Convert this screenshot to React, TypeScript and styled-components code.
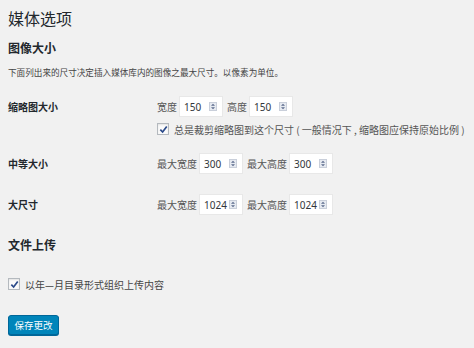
import { Fragment } from 'react';
import styled, { createGlobalStyle } from 'styled-components';

const GlobalStyle = createGlobalStyle`
  html, body {
    margin: 0;
    padding: 0;
    background: #f1f1f1;
  }
  body {
    font-family: "Noto Sans CJK SC", "Noto Sans", sans-serif;
    color: #444;
  }
`;

const Page = styled.div`
  width: 474px;
  height: 348px;
  padding: 6px 8px 0;
  box-sizing: border-box;
  overflow: hidden;
`;

const Title = styled.h1`
  margin: 0;
  font-size: 16px;
  font-weight: 400;
  line-height: 24px;
  color: #23282d;
`;

const SectionTitle = styled.h2<{ $top: number }>`
  margin: ${({ $top }) => $top}px 0 0;
  font-size: 12px;
  font-weight: 700;
  line-height: 16px;
  color: #23282d;
`;

const Description = styled.p`
  margin: 9px 0 0;
  font-size: 8.6px;
  line-height: 14px;
  color: #444;
`;

const Row = styled.div<{ $top: number }>`
  display: grid;
  grid-template-columns: 149px 1fr;
  margin-top: ${({ $top }) => $top}px;
`;

const RowLabel = styled.div`
  font-size: 10px;
  font-weight: 700;
  color: #23282d;
  line-height: 19px;
`;

const Field = styled.div`
  display: flex;
  flex-direction: column;
  gap: 6px;
`;

const InputRow = styled.div`
  display: flex;
  align-items: center;
  height: 19px;
  font-size: 10px;
  color: #555;
`;

const FieldLabel = styled.span`
  margin-right: 3px;
`;

const NumberBox = styled.div`
  display: flex;
  align-items: center;
  justify-content: space-between;
  width: 42px;
  height: 19px;
  box-sizing: border-box;
  padding: 0 5px 0 4px;
  margin-right: 5px;
  background: #fff;
  box-shadow: 0 0 0 1px #e8e8e8;
  font-size: 10px;
  color: #32373c;
  font-family: "Noto Sans", "Noto Sans CJK SC", sans-serif;
`;

const CheckRow = styled.label`
  display: flex;
  align-items: center;
  gap: 5px;
  height: 14px;
  font-size: 10px;
  color: #555;
  white-space: nowrap;
`;

const Box = styled.span`
  display: flex;
  align-items: center;
  justify-content: center;
  width: 10px;
  height: 10px;
  background: #fbfbfb;
  border: 1px solid #b4b9be;
  box-shadow: inset 0 1px 2px rgba(0, 0, 0, 0.1);
  flex-shrink: 0;
`;

const UploadCheck = styled(CheckRow)`
  margin-top: 24px;
  color: #444;
`;

const SaveButton = styled.button`
  display: block;
  margin-top: 24px;
  height: 20px;
  width: 51px;
  padding: 0;
  border: 1px solid #006799;
  border-radius: 3px;
  background: #0085ba;
  color: #fff;
  font-family: "Noto Sans CJK SC", sans-serif;
  font-size: 9.5px;
  box-shadow: 0 1px 0 #006799;
`;

const Spinner = () => (
  <svg width="8" height="9" viewBox="0 0 8 9">
    <rect x="0.5" y="0.5" width="7" height="8" fill="#e6eaf1" stroke="#c9cfda" />
    <path d="M2 3.8 L4 1.8 L6 3.8 Z" fill="#5b6b8c" />
    <path d="M2 5.2 L4 7.2 L6 5.2 Z" fill="#5b6b8c" />
  </svg>
);

const Tick = () => (
  <svg width="9" height="9" viewBox="0 0 10 10">
    <path d="M1.5 5.2 L4 7.8 L8.6 1.6" fill="none" stroke="#2b4a8a" strokeWidth="1.9" />
  </svg>
);

const NumberInput = ({ value }: { value: string }) => (
  <NumberBox>
    {value}
    <Spinner />
  </NumberBox>
);

const sizes = [
  { label: '中等大小', w: '300', h: '300', top: 18 },
  { label: '大尺寸', w: '1024', h: '1024', top: 22 },
];

export default function App() {
  return (
    <Page>
      <GlobalStyle />
      <Title>媒体选项</Title>
      <SectionTitle $top={10}>图像大小</SectionTitle>
      <Description>下面列出来的尺寸决定插入媒体库内的图像之最大尺寸。以像素为单位。</Description>
      <Row $top={18}>
        <RowLabel>缩略图大小</RowLabel>
        <Field>
          <InputRow>
            <FieldLabel>宽度</FieldLabel>
            <NumberInput value="150" />
            <FieldLabel>高度</FieldLabel>
            <NumberInput value="150" />
          </InputRow>
          <CheckRow>
            <Box>
              <Tick />
            </Box>
            总是裁剪缩略图到这个尺寸 ( 一般情况下 , 缩略图应保持原始比例 )
          </CheckRow>
        </Field>
      </Row>
      {sizes.map((s) => (
        <Fragment key={s.label}>
          <Row $top={s.top}>
            <RowLabel>{s.label}</RowLabel>
            <Field>
              <InputRow>
                <FieldLabel>最大宽度</FieldLabel>
                <NumberInput value={s.w} />
                <FieldLabel>最大高度</FieldLabel>
                <NumberInput value={s.h} />
              </InputRow>
            </Field>
          </Row>
        </Fragment>
      ))}
      <SectionTitle $top={23}>文件上传</SectionTitle>
      <UploadCheck>
        <Box>
          <Tick />
        </Box>
        以年—月目录形式组织上传内容
      </UploadCheck>
      <SaveButton>保存更改</SaveButton>
    </Page>
  );
}
